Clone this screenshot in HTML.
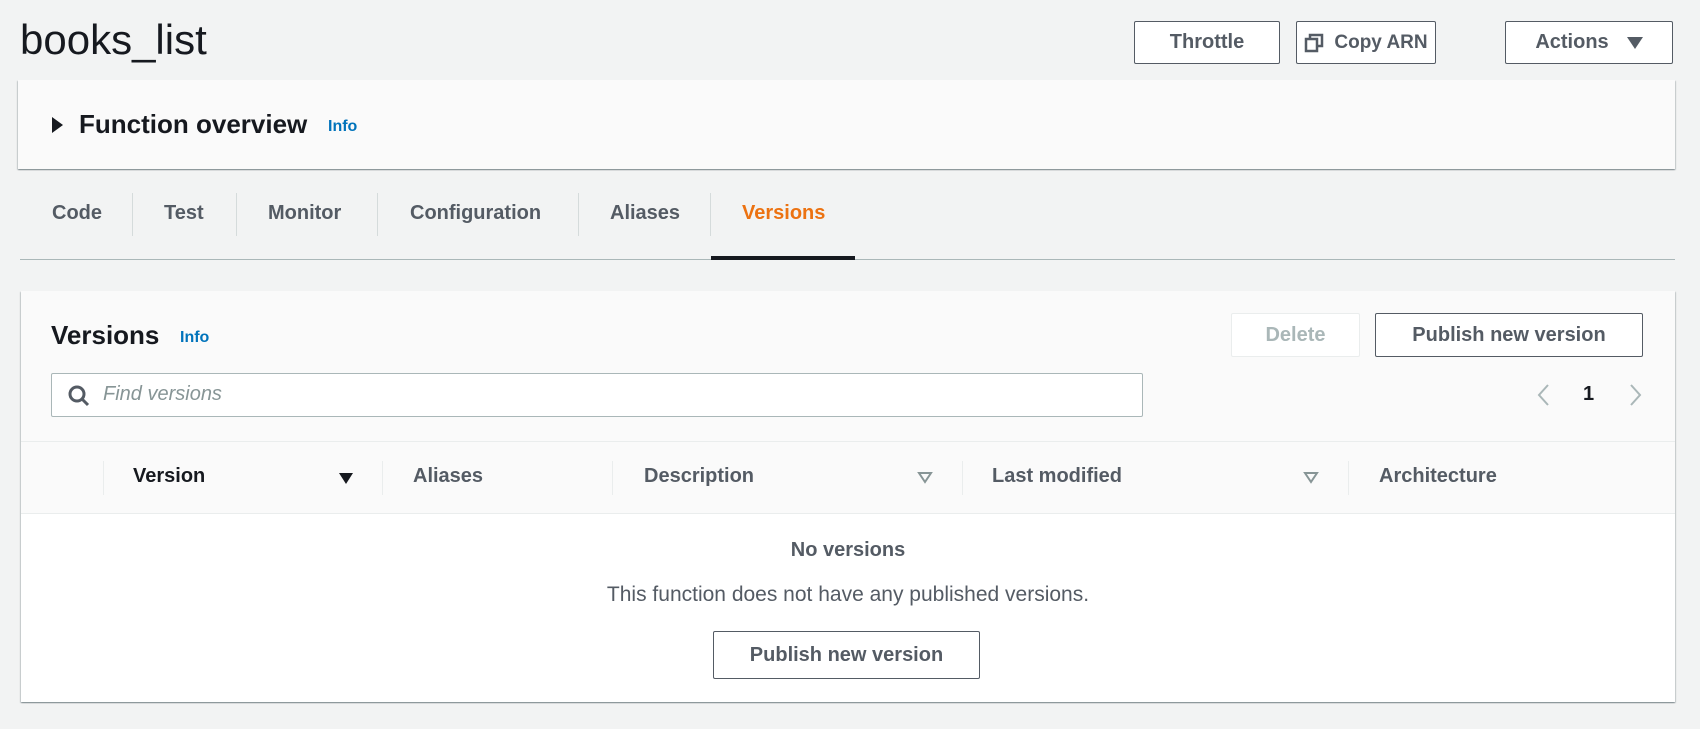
<!DOCTYPE html>
<html><head><meta charset="utf-8"><style>
*{box-sizing:border-box;margin:0;padding:0}
body{width:1700px;height:729px;background:#f2f3f3;font-family:"Liberation Sans",sans-serif;position:relative;overflow:hidden;color:#16191f}
.a{position:absolute}
.btn{position:absolute;border:1px solid #545b64;border-radius:2px;background:#fff;color:#545b64;font-weight:bold;font-size:20px;display:flex;align-items:center;justify-content:center}
.tab{position:absolute;top:202px;font-size:20px;font-weight:bold;color:#545b64}
.sep{position:absolute;top:193px;width:1px;height:43px;background:#d5dbdb}
.th{position:absolute;top:465px;font-size:20px;font-weight:bold;color:#16191f}
.cs{position:absolute;top:461px;width:1px;height:34px;background:#eaeded}
.tri{position:absolute;width:0;height:0;border-left:7px solid transparent;border-right:7px solid transparent;border-top:11px solid #16191f}
</style></head><body>
<div class="a" style="left:20px;top:16px;font-size:42px;color:#16191f">books_list</div>
<div class="btn" style="left:1134px;top:21px;width:146px;height:43px">Throttle</div>
<div class="btn" style="left:1296px;top:21px;width:140px;height:43px;font-size:19px"><svg width="20" height="20" viewBox="0 0 20 20" style="margin-right:10px"><rect x="2" y="6" width="11" height="12" fill="none" stroke="#545b64" stroke-width="2.5"/><path d="M6 6V2h12v11h-5" fill="none" stroke="#545b64" stroke-width="2.5"/></svg>Copy ARN</div>
<div class="btn" style="left:1505px;top:21px;width:168px;height:43px">Actions<span style="display:inline-block;margin-left:18px;border-left:8px solid transparent;border-right:8px solid transparent;border-top:12px solid #545b64"></span></div>

<div class="a" style="left:18px;top:80px;width:1657px;height:89px;background:#fafafa;box-shadow:0 1px 1px 0 rgba(0,28,36,.3),1px 1px 1px 0 rgba(0,28,36,.15),-1px 1px 1px 0 rgba(0,28,36,.15)"></div>
<div class="a" style="left:52px;top:117px;border-top:8px solid transparent;border-bottom:8px solid transparent;border-left:11px solid #16191f"></div>
<div class="a" style="left:79px;top:109px;font-size:26px;font-weight:bold">Function overview</div>
<div class="a" style="left:328px;top:118px;font-size:16px;font-weight:bold;color:#0073bb">Info</div>

<div class="tab" style="left:52px">Code</div>
<div class="sep" style="left:132px"></div>
<div class="tab" style="left:164px">Test</div>
<div class="sep" style="left:236px"></div>
<div class="tab" style="left:268px">Monitor</div>
<div class="sep" style="left:377px"></div>
<div class="tab" style="left:410px">Configuration</div>
<div class="sep" style="left:578px"></div>
<div class="tab" style="left:610px">Aliases</div>
<div class="sep" style="left:710px"></div>
<div class="tab" style="left:742px;color:#ec7211">Versions</div>
<div class="a" style="left:20px;top:259px;width:1655px;height:1px;background:#aab7b8"></div>
<div class="a" style="left:711px;top:256px;width:144px;height:4px;background:#16191f"></div>

<div class="a" style="left:21px;top:291px;width:1654px;height:411px;background:#fff;box-shadow:0 1px 1px 0 rgba(0,28,36,.3),1px 1px 1px 0 rgba(0,28,36,.15),-1px 1px 1px 0 rgba(0,28,36,.15)"></div>
<div class="a" style="left:21px;top:291px;width:1654px;height:223px;background:#fafafa;border-bottom:1px solid #eaeded"></div>
<div class="a" style="left:21px;top:441px;width:1654px;height:1px;background:#eaeded"></div>
<div class="a" style="left:51px;top:320px;font-size:26px;font-weight:bold">Versions</div>
<div class="a" style="left:180px;top:329px;font-size:16px;font-weight:bold;color:#0073bb">Info</div>
<div class="btn" style="left:1231px;top:313px;width:129px;height:44px;border-color:#eaeded;color:#aab7b8">Delete</div>
<div class="btn" style="left:1375px;top:313px;width:268px;height:44px">Publish new version</div>
<div class="a" style="left:51px;top:373px;width:1092px;height:44px;border:1px solid #aab7b8;border-radius:2px;background:#fff"></div>
<svg class="a" style="left:67px;top:384px" width="24" height="24" viewBox="0 0 24 24"><circle cx="10" cy="10" r="7" fill="none" stroke="#545b64" stroke-width="3"/><path d="M15 15l6 6" stroke="#545b64" stroke-width="3"/></svg>
<div class="a" style="left:103px;top:383px;font-size:20px;font-style:italic;color:#879596">Find versions</div>
<svg class="a" style="left:1536px;top:383px" width="16" height="24" viewBox="0 0 16 24"><path d="M12 2L3 12l9 10" fill="none" stroke="#aab7b8" stroke-width="2"/></svg>
<div class="a" style="left:1583px;top:383px;font-size:20px;font-weight:bold">1</div>
<svg class="a" style="left:1627px;top:383px" width="16" height="24" viewBox="0 0 16 24"><path d="M4 2l9 10-9 10" fill="none" stroke="#aab7b8" stroke-width="2"/></svg>

<div class="cs" style="left:103px"></div>
<div class="th" style="left:133px">Version</div>
<div class="tri" style="left:339px;top:473px"></div>
<div class="cs" style="left:382px"></div>
<div class="th" style="left:413px;color:#545b64">Aliases</div>
<div class="cs" style="left:612px"></div>
<div class="th" style="left:644px;color:#545b64">Description</div>
<svg class="a" style="left:917px;top:471px" width="16" height="13" viewBox="0 0 16 13"><path d="M2 2h12L8 11z" fill="none" stroke="#879596" stroke-width="2"/></svg>
<div class="cs" style="left:962px"></div>
<div class="th" style="left:992px;color:#545b64">Last modified</div>
<svg class="a" style="left:1303px;top:471px" width="16" height="13" viewBox="0 0 16 13"><path d="M2 2h12L8 11z" fill="none" stroke="#879596" stroke-width="2"/></svg>
<div class="cs" style="left:1348px"></div>
<div class="th" style="left:1379px;color:#545b64">Architecture</div>

<div class="a" style="left:21px;top:539px;width:1654px;text-align:center;font-size:20px;font-weight:bold;color:#545b64">No versions</div>
<div class="a" style="left:21px;top:583px;width:1654px;text-align:center;font-size:21px;color:#545b64">This function does not have any published versions.</div>
<div class="btn" style="left:713px;top:631px;width:267px;height:48px">Publish new version</div>
</body></html>
